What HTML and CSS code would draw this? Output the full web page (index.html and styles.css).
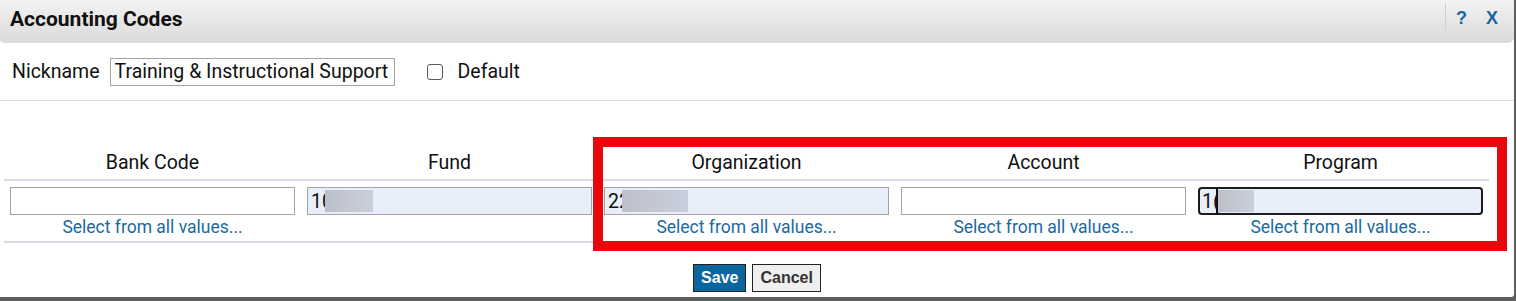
FILE: index.html
```html
<!DOCTYPE html>
<html lang="en">

<head>
    <meta charset="UTF-8">
    <meta name="viewport" content="width=device-width, initial-scale=1.0">
    <title>Accounting Codes</title>
    <link rel="stylesheet" href="styles.css">
</head>

<body>

    <div class="dialog">
        <!-- Başlık -->
        <div class="dialog-header">
            <h1>Accounting Codes</h1>
            <div class="header-tools">
                <a href="#" class="tool">?</a>
                <a href="#" class="tool">X</a>
            </div>
        </div>

        <!-- Takma ad -->
        <div class="nickname-row">
            <label for="nickname">Nickname</label>
            <input type="text" id="nickname" class="nickname-input" value="Training &amp; Instructional Support">
            <label class="default-check">
                <input type="checkbox"> Default
            </label>
        </div>

        <!-- Kod tablosu -->
        <div class="codes">
            <table class="codes-table">
                <thead>
                    <tr>
                        <th>Bank Code</th>
                        <th>Fund</th>
                        <th>Organization</th>
                        <th>Account</th>
                        <th>Program</th>
                    </tr>
                </thead>
                <tbody>
                    <tr>
                        <td>
                            <div class="code-field"></div>
                            <a href="#" class="select-all">Select from all values...</a>
                        </td>
                        <td>
                            <div class="code-field filled">10<span class="blur"></span></div>
                        </td>
                        <td>
                            <div class="code-field filled">22<span class="blur wide"></span></div>
                            <a href="#" class="select-all">Select from all values...</a>
                        </td>
                        <td>
                            <div class="code-field"></div>
                            <a href="#" class="select-all">Select from all values...</a>
                        </td>
                        <td>
                            <div class="code-field filled focused">1(<span class="caret"></span><span class="blur short"></span></div>
                            <a href="#" class="select-all">Select from all values...</a>
                        </td>
                    </tr>
                </tbody>
            </table>
            <div class="highlight"></div>
        </div>

        <!-- Butonlar -->
        <div class="actions">
            <button type="button" class="btn-save">Save</button>
            <button type="button" class="btn-cancel">Cancel</button>
        </div>
    </div>

</body>

</html>
```

FILE: styles.css
```css
body {
    margin: 0;
    height: 301px;
    overflow: hidden;
    background-color: #5e5e5e;
    font-family: Roboto, "Liberation Sans", Arial, sans-serif;
    color: #111;
}

.dialog {
    width: 1514px;
    height: 297px;
    background-color: white;
    border-bottom-right-radius: 3px;
}

.dialog-header {
    display: flex;
    align-items: center;
    justify-content: space-between;
    height: 43px;
    padding-left: 10px;
    background: linear-gradient(#f3f3f3, #dadada);
    border-bottom-left-radius: 4px;
    border-bottom-right-radius: 6px;
}

.dialog-header h1 {
    margin: 0;
    margin-top: -5px;
    font-size: 21px;
    font-weight: bold;
    color: #111;
}

.header-tools {
    display: flex;
    align-items: center;
    height: 28px;
    margin-top: -10px;
    border-left: 1px solid #d0d0d0;
    padding-left: 10px;
    padding-right: 16px;
}

.tool {
    font-family: "Liberation Sans", Arial, sans-serif;
    font-weight: bold;
    font-size: 18px;
    color: #17699f;
    text-decoration: none;
    margin-top: 3px;
}

.tool + .tool {
    margin-left: 19px;
}

.nickname-row {
    display: flex;
    align-items: center;
    height: 57px;
    padding-left: 12px;
    border-bottom: 1px solid #dcdcdc;
    font-size: 19.5px;
}

.nickname-input {
    width: 285px;
    height: 28px;
    box-sizing: border-box;
    margin-left: 10px;
    padding: 0 4px;
    border: 1px solid #a3a3a3;
    font-family: inherit;
    font-size: 19.5px;
    color: #111;
}

.default-check {
    display: flex;
    align-items: center;
    margin-left: 32px;
}

.default-check input {
    appearance: none;
    width: 16px;
    height: 16px;
    margin: 0 15px 0 0;
    border: 1.5px solid #5a5a5a;
    border-radius: 3px;
    background: white;
}

.codes {
    position: relative;
    padding: 45px 0 0 4px;
}

.codes-table {
    border-collapse: collapse;
    table-layout: fixed;
    width: 1485px;
}

.codes-table th {
    font-weight: normal;
    font-size: 19.5px;
    height: 33px;
    padding: 0;
    border-bottom: 2px solid #d8dde6;
    vertical-align: middle;
}

.codes-table td {
    height: 62px;
    padding: 6px 6px 0 6px;
    box-sizing: border-box;
    vertical-align: top;
    text-align: center;
    border-bottom: 2px solid #d8dde6;
}

.code-field {
    display: flex;
    align-items: center;
    width: 285px;
    height: 28px;
    box-sizing: border-box;
    border: 1px solid #a3a3a3;
    padding-left: 3px;
    font-size: 19.5px;
    text-align: left;
    background-color: white;
}

.code-field.filled {
    background-color: #e8effb;
}

.code-field.focused {
    border: 2px solid #1c1c1c;
    border-radius: 4px;
    padding-left: 2px;
}

.blur {
    display: inline-block;
    width: 48px;
    height: 22px;
    margin-left: -8px;
    background: linear-gradient(90deg, #bcc0ca, #c9cfdc);
}

.blur.wide {
    width: 66px;
    margin-left: -8px;
}

.blur.short {
    width: 36px;
    margin-left: 0;
}

.caret {
    display: inline-block;
    width: 2px;
    height: 26px;
    margin-left: -4px;
    background-color: #111;
}

.select-all {
    display: inline-block;
    margin-top: 2px;
    font-size: 17.5px;
    color: #1a6aa0;
    text-decoration: none;
}

.highlight {
    position: absolute;
    left: 593px;
    top: 36px;
    width: 894px;
    height: 94px;
    border: 10px solid #e8070a;
    pointer-events: none;
}

.actions {
    display: flex;
    justify-content: center;
    gap: 6px;
    margin-top: 21px;
}

.actions button {
    height: 28px;
    padding: 0 7px;
    font-family: "Liberation Sans", Arial, sans-serif;
    font-size: 16px;
    font-weight: bold;
    border: 1px solid #222;
    cursor: pointer;
}

.btn-save {
    background-color: #0b66a0;
    color: white;
}

.btn-cancel {
    background-color: #efefef;
    color: #333;
}
```
